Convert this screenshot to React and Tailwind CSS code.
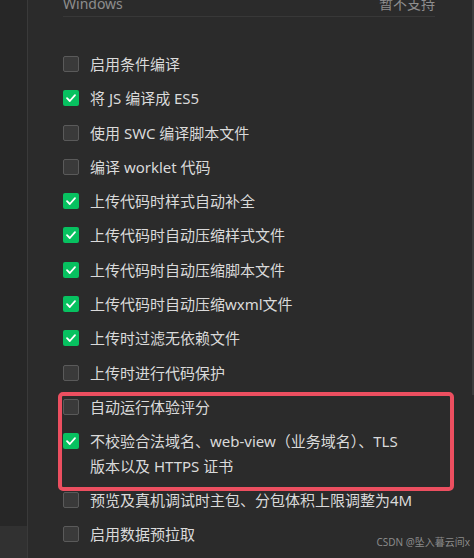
import React from "react";

const rows = [
  { label: "启用条件编译", checked: false },
  { label: "将 JS 编译成 ES5", checked: true },
  { label: "使用 SWC 编译脚本文件", checked: false },
  { label: "编译 worklet 代码", checked: false },
  { label: "上传代码时样式自动补全", checked: true },
  { label: "上传代码时自动压缩样式文件", checked: true },
  { label: "上传代码时自动压缩脚本文件", checked: true },
  { label: "上传代码时自动压缩wxml文件", checked: true },
  { label: "上传时过滤无依赖文件", checked: true },
  { label: "上传时进行代码保护", checked: false },
];

const highlighted = [
  { label: "自动运行体验评分", checked: false },
  {
    label: (
      <>
        不校验合法域名、web-view（业务域名）、TLS
        <br />
        版本以及 HTTPS 证书
      </>
    ),
    checked: true,
  },
];

const after = [
  { label: "预览及真机调试时主包、分包体积上限调整为4M", checked: false },
  { label: "启用数据预拉取", checked: false },
];

function Box({ checked }) {
  if (checked) {
    return (
      <span className="mt-[4px] flex h-[16px] w-[16px] shrink-0 items-center justify-center rounded-[2px] bg-[#07c160]">
        <svg width="12" height="12" viewBox="0 0 12 12" fill="none">
          <path d="M2 6.2 L4.8 9 L10 3.2" stroke="white" strokeWidth="1.8" strokeLinecap="round" strokeLinejoin="round" />
        </svg>
      </span>
    );
  }
  return (
    <span className="mt-[4px] block h-[16px] w-[16px] shrink-0 rounded-[2px] border border-[#5a5a5a] bg-[#3a3a3a]" />
  );
}

function Row({ label, checked }) {
  return (
    <div className="flex items-start gap-[11px] py-[5px] text-[15px] leading-[24.3px] text-[#dadada]">
      <Box checked={checked} />
      <span>{label}</span>
    </div>
  );
}

export default function App() {
  return (
    <div
      className="relative flex h-[558px] w-[474px] overflow-hidden bg-[#2b2b2b]"
      style={{ fontFamily: '"Noto Sans", "Noto Sans CJK SC", sans-serif' }}
    >
      <div className="flex w-[28px] shrink-0 flex-col border-r border-[#3a3a3a] bg-[#272727]">
        <div className="flex-1" />
        <div className="h-[32px] bg-[#313131]" />
      </div>
      <div className="flex flex-1 flex-col pl-[35px]">
        <div className="-mt-[6px] flex w-[372px] items-center justify-between border-b border-[#383838] pb-[2px] text-[14px] leading-[20px] text-[#8e8e8e]">
          <span>Windows</span>
          <span>暂不支持</span>
        </div>
        <div className="mt-[30px] flex flex-col">
          {rows.map((r, i) => (
            <Row key={i} {...r} />
          ))}
          <div className="relative">
            {highlighted.map((r, i) => (
              <Row key={i} {...r} />
            ))}
            <div className="pointer-events-none absolute -left-[5px] top-[2px] -bottom-[8px] w-[396px] rounded-[5px] border-[4px] border-[#ec4f60]" />
          </div>
          {after.map((r, i) => (
            <Row key={i} {...r} />
          ))}
        </div>
      </div>
      <div className="absolute right-0 top-0 h-[395px] w-[2px] bg-[#3c3c3c]" />
      <div className="absolute bottom-[10px] right-[4px] text-[10px] leading-[12px] text-[#8a8a8a]">
        CSDN @坠入暮云间x
      </div>
    </div>
  );
}
